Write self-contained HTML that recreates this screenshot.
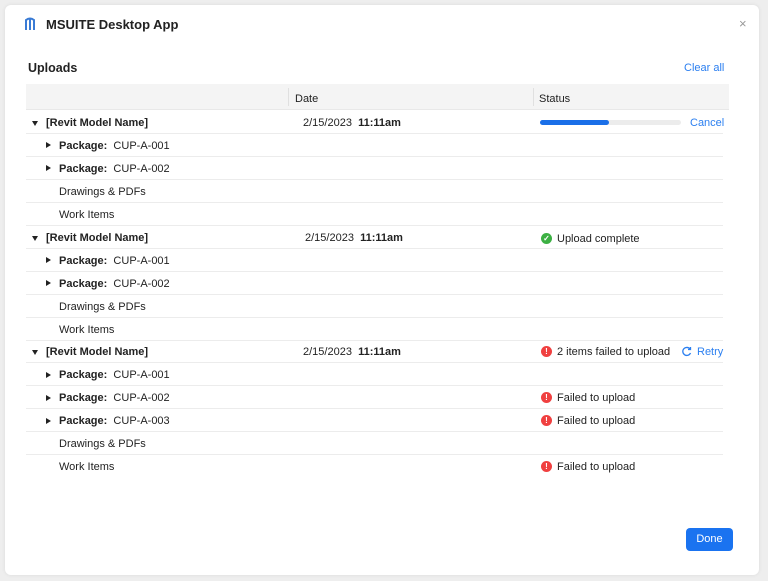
<!DOCTYPE html>
<html><head><style>
*{margin:0;padding:0;box-sizing:border-box}
body{width:768px;height:581px;background:#eeeeee;font-family:"Liberation Sans",sans-serif;color:#222;position:relative;overflow:hidden}
.dlg{position:absolute;left:5px;top:5px;width:754px;height:570px;background:#fff;border-radius:6px;box-shadow:0 0 4px rgba(0,0,0,.08)}
.a{position:absolute;white-space:nowrap}
.t{font-size:11px;margin-top:1px}
.b{font-weight:bold}
.row{position:absolute;left:26px;width:697px;height:23px;border-bottom:1px solid #ececec}
.tri{position:absolute;width:0;height:0}
.down{border-left:3.5px solid transparent;border-right:3.5px solid transparent;border-top:5px solid #222}
.right{border-top:3.5px solid transparent;border-bottom:3.5px solid transparent;border-left:5px solid #222}
.err{position:absolute;width:11px;height:11px;border-radius:50%;background:#f04040;color:#fff;font-size:8px;font-weight:bold;text-align:center;line-height:11px}
.blue{color:#2b7ff0}
</style></head><body>
<div class="dlg"></div>
<svg class="a" style="left:24px;top:17px" width="12" height="14" viewBox="0 0 12 14"><path d="M2 13V3Q6 0 10 3V13M6 2V13" stroke="#3a7bd5" stroke-width="2" fill="none"/></svg>
<div class="a b" style="left:46px;top:17px;font-size:13px">MSUITE Desktop App</div>
<div class="a" style="left:739px;top:16px;font-size:13px;color:#999">×</div>
<div class="a b" style="left:28px;top:61px;font-size:12.5px">Uploads</div>
<div class="a t blue" style="left:684px;top:61px">Clear all</div>
<div class="a" style="left:26px;top:84px;width:703px;height:26px;background:#f4f4f4;border-bottom:1px solid #e8e8e8"></div>
<div class="a" style="left:288px;top:88px;width:1px;height:18px;background:#e0e0e0"></div>
<div class="a" style="left:533px;top:88px;width:1px;height:18px;background:#e0e0e0"></div>
<div class="a t" style="left:295px;top:92px">Date</div>
<div class="a t" style="left:539px;top:92px">Status</div>

<div class="row" style="top:111px"></div><div class="row" style="top:134px"></div><div class="row" style="top:157px"></div><div class="row" style="top:180px"></div><div class="row" style="top:203px"></div>
<div class="row" style="top:226px"></div><div class="row" style="top:249px"></div><div class="row" style="top:272px"></div><div class="row" style="top:295px"></div><div class="row" style="top:318px"></div>
<div class="row" style="top:340px"></div><div class="row" style="top:363px"></div><div class="row" style="top:386px"></div><div class="row" style="top:409px"></div><div class="row" style="top:432px"></div>

<div class="tri down" style="left:32px;top:121px"></div><div class="a t b" style="left:46px;top:116px">[Revit Model Name]</div>
<div class="a t" style="left:303px;top:116px">2/15/2023 &nbsp;<b>11:11am</b></div>
<div class="a" style="left:540px;top:120px;width:141px;height:5px;border-radius:3px;background:#ececec"></div>
<div class="a" style="left:540px;top:120px;width:69px;height:5px;border-radius:3px;background:#1a6fe8"></div>
<div class="a t blue" style="left:690px;top:116px">Cancel</div>
<div class="tri right" style="left:46px;top:142px"></div><div class="a t" style="left:59px;top:139px"><b>Package:</b>&nbsp; CUP-A-001</div>
<div class="tri right" style="left:46px;top:165px"></div><div class="a t" style="left:59px;top:162px"><b>Package:</b>&nbsp; CUP-A-002</div>
<div class="a t" style="left:59px;top:185px">Drawings &amp; PDFs</div>
<div class="a t" style="left:59px;top:208px">Work Items</div>

<div class="tri down" style="left:32px;top:236px"></div><div class="a t b" style="left:46px;top:231px">[Revit Model Name]</div>
<div class="a t" style="left:305px;top:231px">2/15/2023 &nbsp;<b>11:11am</b></div>
<div class="err" style="left:541px;top:233px;background:#3cb043">✓</div><div class="a t" style="left:557px;top:232px">Upload complete</div>
<div class="tri right" style="left:46px;top:257px"></div><div class="a t" style="left:59px;top:254px"><b>Package:</b>&nbsp; CUP-A-001</div>
<div class="tri right" style="left:46px;top:280px"></div><div class="a t" style="left:59px;top:277px"><b>Package:</b>&nbsp; CUP-A-002</div>
<div class="a t" style="left:59px;top:300px">Drawings &amp; PDFs</div>
<div class="a t" style="left:59px;top:323px">Work Items</div>

<div class="tri down" style="left:32px;top:350px"></div><div class="a t b" style="left:46px;top:345px">[Revit Model Name]</div>
<div class="a t" style="left:303px;top:345px">2/15/2023 &nbsp;<b>11:11am</b></div>
<div class="err" style="left:541px;top:346px">!</div><div class="a t" style="left:557px;top:345px">2 items failed to upload</div>
<svg class="a" style="left:681px;top:346px" width="11" height="11" viewBox="0 0 11 11"><path d="M9 3A4 4 0 1 0 9.5 7" stroke="#2b7ff0" stroke-width="1.3" fill="none"/><path d="M9.5 1V3.5H7" stroke="#2b7ff0" stroke-width="1.3" fill="none"/></svg>
<div class="a t blue" style="left:697px;top:345px">Retry</div>
<div class="tri right" style="left:46px;top:372px"></div><div class="a t" style="left:59px;top:368px"><b>Package:</b>&nbsp; CUP-A-001</div>
<div class="tri right" style="left:46px;top:395px"></div><div class="a t" style="left:59px;top:391px"><b>Package:</b>&nbsp; CUP-A-002</div>
<div class="err" style="left:541px;top:392px">!</div><div class="a t" style="left:557px;top:391px">Failed to upload</div>
<div class="tri right" style="left:46px;top:418px"></div><div class="a t" style="left:59px;top:414px"><b>Package:</b>&nbsp; CUP-A-003</div>
<div class="err" style="left:541px;top:415px">!</div><div class="a t" style="left:557px;top:414px">Failed to upload</div>
<div class="a t" style="left:59px;top:437px">Drawings &amp; PDFs</div>
<div class="a t" style="left:59px;top:460px">Work Items</div>
<div class="err" style="left:541px;top:461px">!</div><div class="a t" style="left:557px;top:460px">Failed to upload</div>

<div class="a" style="left:686px;top:528px;width:47px;height:23px;background:#1a73f0;border-radius:4px;color:#fff;text-align:center;line-height:23px;font-size:11px">Done</div>
</body></html>
